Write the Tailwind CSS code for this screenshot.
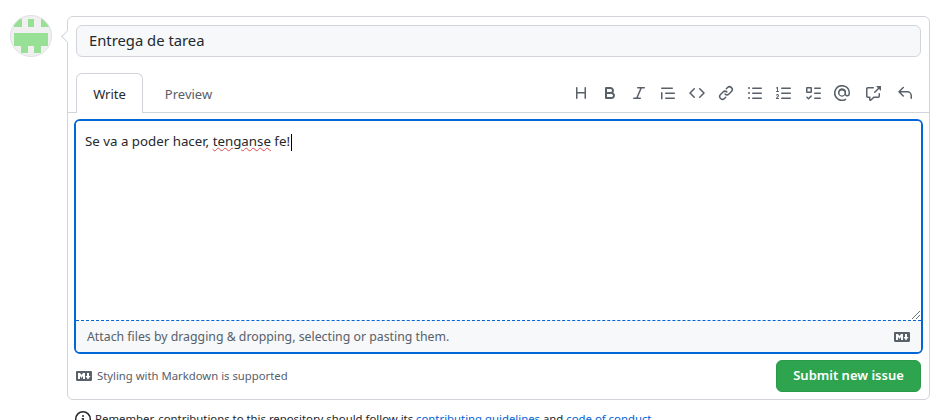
<!DOCTYPE html>
<html lang="es">
<head>
  <meta charset="UTF-8" />
  <title>New issue</title>
  <script src="https://cdn.jsdelivr.net/npm/@tailwindcss/browser@4"></script>
</head>
<body class="h-[420px] overflow-hidden bg-white font-['Noto_Sans',sans-serif] text-[#24292e]">
  <div class="flex items-start pl-[10px] pr-[9px] pt-[15px]">

    <!-- avatar -->
    <div class="h-[42px] w-[42px] shrink-0 overflow-hidden rounded-full border border-[#dfe1e4] bg-[#f0f0f0]">
      <svg class="h-full w-full" viewBox="0 0 40 40" shape-rendering="crispEdges">
        <path fill="#98e096" d="M3 3h8v8H3zM17 3h6v8h-6zM30 3h8v8h-8zM3 17h34v13H3zM10 30h7v7h-7zM23 30h7v7h-7z"/>
      </svg>
    </div>

    <div class="ml-[15px] mt-px min-w-0 flex-1">
      <!-- form panel -->
      <div class="relative h-[384px] rounded-md border border-[#d1d5da] px-2 pt-2">
        <div class="absolute left-[-5px] top-[15px] h-[9px] w-[9px] rotate-45 border-b border-l border-[#d1d5da] bg-white"></div>

        <div class="flex h-8 items-center rounded-md border border-[#d1d5da] bg-[#f6f8fa] px-3 pb-[2px] text-[14.8px] leading-5">Entrega de tarea</div>

        <!-- tabs + toolbar -->
        <div class="-mx-2 mt-4 flex h-10 items-end border-b border-[#d1d5da] pl-2">
          <div class="relative -mb-px flex h-10 w-[67px] items-center justify-center rounded-t-md border border-b-0 border-[#d1d5da] bg-white pt-[2px] text-[13px]">Write</div>
          <div class="flex h-10 w-[91px] items-center justify-center pt-[5px] text-[13px] text-[#586069]">Preview</div>
          <div class="ml-auto mr-[16px] flex h-10 items-center gap-[13px] pt-[2px] text-[#586069]">
            <svg class="h-4 w-4 fill-current" viewBox="0 0 16 16"><path d="M3.75 2a.75.75 0 0 1 .75.75V7h7V2.75a.75.75 0 0 1 1.5 0v10.5a.75.75 0 0 1-1.5 0V8.5h-7v4.75a.75.75 0 0 1-1.5 0V2.75A.75.75 0 0 1 3.75 2Z"/></svg>
            <svg class="h-4 w-4 fill-current" viewBox="0 0 16 16"><path d="M4 2h4.5a3.501 3.501 0 0 1 2.852 5.53A3.499 3.499 0 0 1 9.5 14H4a1 1 0 0 1-1-1V3a1 1 0 0 1 1-1Zm1 7v3h4.5a1.5 1.5 0 0 0 0-3Zm3.5-2a1.5 1.5 0 0 0 0-3H5v3Z"/></svg>
            <svg class="h-4 w-4 fill-current" viewBox="0 0 16 16"><path d="M6 2.75A.75.75 0 0 1 6.75 2h6.5a.75.75 0 0 1 0 1.5h-2.505l-3.858 9H9.25a.75.75 0 0 1 0 1.5h-6.5a.75.75 0 0 1 0-1.5h2.505l3.858-9H6.75A.75.75 0 0 1 6 2.75Z"/></svg>
            <svg class="h-4 w-4 fill-current" viewBox="0 0 16 16"><path d="M1.75 2.5h10.5a.75.75 0 0 1 0 1.5H1.75a.75.75 0 0 1 0-1.5Zm4 5h8.5a.75.75 0 0 1 0 1.5h-8.5a.75.75 0 0 1 0-1.5Zm0 5h8.5a.75.75 0 0 1 0 1.5h-8.5a.75.75 0 0 1 0-1.5ZM2.5 7.75v6a.75.75 0 0 1-1.5 0v-6a.75.75 0 0 1 1.5 0Z"/></svg>
            <svg class="h-4 w-4 fill-current" viewBox="0 0 16 16"><path d="m11.28 3.22 4.25 4.25a.75.75 0 0 1 0 1.06l-4.25 4.25a.749.749 0 0 1-1.275-.326.749.749 0 0 1 .215-.734L13.94 8l-3.72-3.72a.749.749 0 0 1 .326-1.275.749.749 0 0 1 .734.215Zm-6.56 0a.751.751 0 0 1 1.042.018.751.751 0 0 1 .018 1.042L2.06 8l3.72 3.72a.749.749 0 0 1-.326 1.275.749.749 0 0 1-.734-.215L.47 8.53a.75.75 0 0 1 0-1.06Z"/></svg>
            <svg class="h-4 w-4 fill-current" viewBox="0 0 16 16"><path d="m7.775 3.275 1.25-1.25a3.5 3.5 0 1 1 4.95 4.95l-2.5 2.5a3.5 3.5 0 0 1-4.95 0 .751.751 0 0 1 .018-1.042.751.751 0 0 1 1.042-.018 1.998 1.998 0 0 0 2.83 0l2.5-2.5a2.002 2.002 0 0 0-2.83-2.83l-1.25 1.25a.751.751 0 0 1-1.042-.018.751.751 0 0 1-.018-1.042Zm-4.69 9.64a1.998 1.998 0 0 0 2.83 0l1.25-1.25a.751.751 0 0 1 1.042.018.751.751 0 0 1 .018 1.042l-1.25 1.25a3.5 3.5 0 1 1-4.95-4.95l2.5-2.5a3.5 3.5 0 0 1 4.95 0 .751.751 0 0 1-.018 1.042.751.751 0 0 1-1.042.018 1.998 1.998 0 0 0-2.83 0l-2.5 2.5a1.998 1.998 0 0 0 0 2.83Z"/></svg>
            <svg class="h-4 w-4 fill-current" viewBox="0 0 16 16"><path d="M5.75 2.5h8.5a.75.75 0 0 1 0 1.5h-8.5a.75.75 0 0 1 0-1.5Zm0 5h8.5a.75.75 0 0 1 0 1.5h-8.5a.75.75 0 0 1 0-1.5Zm0 5h8.5a.75.75 0 0 1 0 1.5h-8.5a.75.75 0 0 1 0-1.5ZM2 14a1 1 0 1 1 0-2 1 1 0 0 1 0 2Zm1-6a1 1 0 1 1-2 0 1 1 0 0 1 2 0ZM2 4a1 1 0 1 1 0-2 1 1 0 0 1 0 2Z"/></svg>
            <svg class="h-4 w-4 fill-current" viewBox="0 0 16 16"><path d="M5 3.25a.75.75 0 0 1 .75-.75h8.5a.75.75 0 0 1 0 1.5h-8.5A.75.75 0 0 1 5 3.25Zm0 5a.75.75 0 0 1 .75-.75h8.5a.75.75 0 0 1 0 1.5h-8.5A.75.75 0 0 1 5 8.25Zm0 5a.75.75 0 0 1 .75-.75h8.5a.75.75 0 0 1 0 1.5h-8.5a.75.75 0 0 1-.75-.75ZM.924 10.32a.5.5 0 0 1-.851-.525l.001-.001.001-.002.002-.004.007-.011c.097-.144.215-.273.348-.384.228-.19.588-.392 1.068-.392.468 0 .858.181 1.126.484.259.294.377.673.377 1.038 0 .987-.686 1.495-1.156 1.845l-.047.035c-.303.225-.522.4-.654.597h1.357a.5.5 0 0 1 0 1H.5a.5.5 0 0 1-.5-.5c0-1.005.692-1.52 1.167-1.875l.035-.025c.531-.396.8-.625.8-1.078a.57.57 0 0 0-.128-.376C1.806 10.068 1.695 10 1.5 10a.658.658 0 0 0-.429.163.835.835 0 0 0-.144.153ZM2.003 2.5V6h.503a.5.5 0 0 1 0 1H.5a.5.5 0 0 1 0-1h.503V3.308l-.28.14a.5.5 0 0 1-.446-.895l1.003-.5a.5.5 0 0 1 .723.447Z"/></svg>
            <svg class="h-4 w-4 fill-current" viewBox="0 0 16 16"><path d="M2 2h4a1 1 0 0 1 1 1v4a1 1 0 0 1-1 1H2a1 1 0 0 1-1-1V3a1 1 0 0 1 1-1Zm4.655 8.595a.75.75 0 0 1 0 1.06L4.03 14.28a.75.75 0 0 1-1.06 0l-1.5-1.5a.749.749 0 0 1 .326-1.275.749.749 0 0 1 .734.215l.97.97 2.095-2.095a.75.75 0 0 1 1.06 0ZM9.75 2.5h5.5a.75.75 0 0 1 0 1.5h-5.5a.75.75 0 0 1 0-1.5Zm0 5h5.5a.75.75 0 0 1 0 1.5h-5.5a.75.75 0 0 1 0-1.5Zm0 5h5.5a.75.75 0 0 1 0 1.5h-5.5a.75.75 0 0 1 0-1.5Zm-7.25-9v3h3v-3Z"/></svg>
            <svg class="h-4 w-4 fill-current" viewBox="0 0 16 16"><path d="M4.75 2.37a6.501 6.501 0 0 0 6.5 11.26.75.75 0 0 1 .75 1.298A7.999 7.999 0 0 1 .989 4.148 8 8 0 0 1 16 8v.75a2.75 2.75 0 0 1-5.072 1.475 3.999 3.999 0 0 1-6.65-4.19A4 4 0 0 1 12 8v.75a1.25 1.25 0 0 0 2.5 0V8a6.5 6.5 0 0 0-9.75-5.63ZM10.5 8a2.5 2.5 0 1 0-5 0 2.5 2.5 0 0 0 5 0Z"/></svg>
            <svg class="ml-[2px] h-4 w-4 fill-current" viewBox="0 0 16 16"><path d="M2.75 3.5a.25.25 0 0 0-.25.25v7.5c0 .138.112.25.25.25h2a.75.75 0 0 1 .75.75v2.19l2.72-2.72a.749.749 0 0 1 .53-.22h4.5a.25.25 0 0 0 .25-.25v-2.5a.75.75 0 0 1 1.5 0v2.5A1.75 1.75 0 0 1 13.25 13H9.06l-2.573 2.573A1.458 1.458 0 0 1 4 14.543V13H2.75A1.75 1.75 0 0 1 1 11.25v-7.5C1 2.784 1.784 2 2.75 2h5.5a.75.75 0 0 1 0 1.5ZM16 1.25v4.146a.25.25 0 0 1-.427.177L14.03 4.03l-3.75 3.75a.749.749 0 0 1-1.275-.326.749.749 0 0 1 .215-.734l3.75-3.75-1.543-1.543A.25.25 0 0 1 11.604 1h4.146a.25.25 0 0 1 .25.25Z"/></svg>
            <svg class="ml-[3px] h-4 w-4 fill-current" viewBox="0 0 16 16"><path d="M6.78 1.97a.75.75 0 0 1 0 1.06L3.81 6h6.44A4.75 4.75 0 0 1 15 10.75v2.5a.75.75 0 0 1-1.5 0v-2.5a3.25 3.25 0 0 0-3.25-3.25H3.81l2.97 2.97a.749.749 0 0 1-.326 1.275.749.749 0 0 1-.734-.215L1.47 7.28a.75.75 0 0 1 0-1.06l4.25-4.25a.75.75 0 0 1 1.06 0Z"/></svg>
          </div>
        </div>

        <!-- focused editor -->
        <div class="-mx-[2px] mt-[6px] flex h-[235px] flex-col overflow-hidden rounded-md border-2 border-[#0366d6]">
          <div class="relative flex-1 bg-white px-[9px] pt-[10px] text-[13.3px] leading-5">
            <span>Se va a poder hacer, <span class="underline decoration-[#e5484d] decoration-wavy decoration-1">tenganse</span> fe!</span><span class="ml-px inline-block h-[17px] w-px bg-black align-middle"></span>
            <svg class="absolute bottom-px right-px h-[9px] w-[9px] stroke-[#6a737d]" viewBox="0 0 9 9"><path d="M1 9 9 1M5 9l4-4" fill="none"/></svg>
          </div>
          <div class="flex h-[32px] items-center justify-between border-t border-dashed border-[#0366d6] bg-[#f6f8fa] pl-[11px] pr-[11px] text-[12.3px] text-[#586069]">
            <span class="pt-[2px]">Attach files by dragging &amp; dropping, selecting or pasting them.</span>
            <svg class="h-4 w-4 fill-[#586069]" viewBox="0 0 16 16"><path d="M14.85 3c.63 0 1.15.52 1.14 1.15v7.7c0 .63-.51 1.15-1.15 1.15H1.15C.52 13 0 12.48 0 11.84V4.15C0 3.52.52 3 1.15 3ZM9 11V5H7L5.5 7 4 5H2v6h2V8l1.5 1.92L7 8v3Zm2.99.5L14.5 8H13V5h-2v3H9.5Z"/></svg>
          </div>
        </div>

        <!-- footer -->
        <div class="mt-[6px] flex h-8 items-center justify-between">
          <div class="flex items-center gap-[5px] text-[11.3px] text-[#586069]">
            <svg class="h-4 w-4 fill-[#586069]" viewBox="0 0 16 16"><path d="M14.85 3c.63 0 1.15.52 1.14 1.15v7.7c0 .63-.51 1.15-1.15 1.15H1.15C.52 13 0 12.48 0 11.84V4.15C0 3.52.52 3 1.15 3ZM9 11V5H7L5.5 7 4 5H2v6h2V8l1.5 1.92L7 8v3Zm2.99.5L14.5 8H13V5h-2v3H9.5Z"/></svg>
            <span>Styling with Markdown is supported</span>
          </div>
          <button class="flex h-8 w-[145px] items-center justify-center rounded-md border border-[#2a9a4a] bg-[#2ea44f] text-[13px] font-semibold text-white">Submit new issue</button>
        </div>
      </div>

      <!-- contribution note -->
      <div class="ml-[8px] mt-[10px] flex items-center gap-[4px] text-[11.35px] text-[#24292e]">
        <svg class="h-4 w-4 fill-current" viewBox="0 0 16 16"><path d="M0 8a8 8 0 1 1 16 0A8 8 0 0 1 0 8Zm8-6.5a6.5 6.5 0 1 0 0 13 6.5 6.5 0 0 0 0-13ZM6.5 7.75A.75.75 0 0 1 7.25 7h1a.75.75 0 0 1 .75.75v2.75h.25a.75.75 0 0 1 0 1.5h-2a.75.75 0 0 1 0-1.5h.25v-2h-.25a.75.75 0 0 1-.75-.75ZM8 6a1 1 0 1 1 0-2 1 1 0 0 1 0 2Z"/></svg>
        <span>Remember, contributions to this repository should follow its <a class="text-[#0366d6]">contributing guidelines</a> and <a class="text-[#0366d6]">code of conduct</a>.</span>
      </div>
    </div>
  </div>
</body>
</html>
